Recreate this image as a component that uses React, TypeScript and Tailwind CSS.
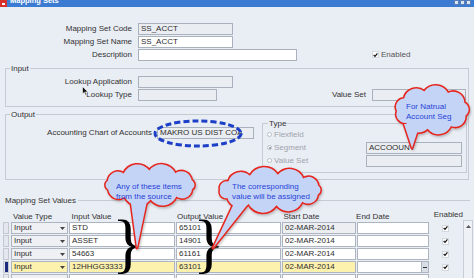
import React from 'react';

function cloudPath(cx: number, cy: number, rx: number, ry: number, n: number, off = 0.3): string {
  const pts: [number, number][] = [];
  for (let i = 0; i < n; i++) {
    const t = (2 * Math.PI * i) / n + off;
    pts.push([cx + rx * Math.cos(t), cy + ry * Math.sin(t)]);
  }
  let d = `M ${pts[0][0].toFixed(2)} ${pts[0][1].toFixed(2)}`;
  for (let i = 1; i <= n; i++) {
    const a = pts[i - 1];
    const b = pts[i % n];
    const c = Math.hypot(b[0] - a[0], b[1] - a[1]);
    const r = c * 0.58;
    d += ` A ${r.toFixed(2)} ${r.toFixed(2)} 0 0 1 ${b[0].toFixed(2)} ${b[1].toFixed(2)}`;
  }
  return d + ' Z';
}

type CloudDef = { cx: number; cy: number; rx: number; ry: number; n: number; tail: string };

const clouds: CloudDef[] = [
  { cx: 150, cy: 185, rx: 44, ry: 14.5, n: 10, tail: 'M 130 196 L 137 248 L 148 196 Z' },
  { cx: 270, cy: 190, rx: 50, ry: 15.5, n: 11, tail: 'M 236 199 L 213 248 L 252 199 Z' },
  { cx: 432, cy: 110, rx: 35, ry: 19, n: 9, tail: 'M 404 124 L 412 148 L 420 124 Z' },
];

function Check() {
  return (
    <svg width="6" height="6" viewBox="0 0 6 6">
      <path d="M0.8 3 L2.4 4.6 L5.3 1" stroke="#111" strokeWidth="1.4" fill="none" />
    </svg>
  );
}

function CheckBox() {
  return (
    <div className="w-[7px] h-[7px] bg-white border border-[#d3d7de] flex items-center justify-center">
      <Check />
    </div>
  );
}

function Input({ w, value, gray }: { w: string; value?: string; gray?: boolean }) {
  return (
    <div
      className={`${w} h-[12px] shrink-0 border border-[#a9b1bd] ${gray ? 'bg-[#eaedf2]' : 'bg-white'} flex items-center pl-[2px] text-[#2e2e2e] leading-none overflow-hidden whitespace-nowrap`}
    >
      {value}
    </div>
  );
}

function Arrow() {
  return (
    <svg width="5" height="3" viewBox="0 0 5 3">
      <path d="M0 0 L5 0 L2.5 3 Z" fill="#444" />
    </svg>
  );
}

type RowData = { inp: string; out: string; start: string; current?: boolean; empty?: boolean; grayStart?: boolean };

const rows: RowData[] = [
  { inp: 'STD', out: '65101', start: '02-MAR-2014', grayStart: true },
  { inp: 'ASSET', out: '14901', start: '02-MAR-2014' },
  { inp: '54663', out: '61161', start: '02-MAR-2014' },
  { inp: '12HHGG3333', out: '63101', start: '02-MAR-2014', current: true },
  { inp: '', out: '', start: '', empty: true },
];

function TableRow({ r }: { r: RowData }) {
  const bg = r.current ? 'bg-[#fcf1ad]' : 'bg-white';
  const cell = `h-[12px] border border-[#aeb5c1] flex items-center pl-[2px] leading-none text-[#2e2e2e]`;
  return (
    <div className="flex h-[12px] pl-[3px] shrink-0">
      <div className="w-[6px] h-[12px] border border-[#c3c8d0] bg-[#e4e8ee] flex items-center justify-center">
        {r.current && <div className="w-[3px] h-[10px] bg-[#1c2a7e]" />}
      </div>
      <div className={`ml-[2px] w-[57px] ${cell} ${r.current ? 'bg-[#fcf1ad]' : 'bg-[#eef0f4]'}`}>
        {!r.empty && <span>Input</span>}
        {!r.empty && (
          <span className="ml-auto mr-[2px] flex">
            <Arrow />
          </span>
        )}
      </div>
      <div className={`ml-[1px] w-[106px] ${cell} ${bg}`}>{r.inp}</div>
      <div className={`ml-[1px] w-[105px] ${cell} ${bg}`}>{r.out}</div>
      <div className={`ml-[1px] w-[74px] ${cell} ${r.grayStart ? 'bg-[#eceef2]' : bg}`}>{r.start}</div>
      <div className={`ml-[1px] w-[72px] ${cell} bg-white ${r.current ? 'pr-0 border-[#8d95a3]' : ''}`}>
        {r.current && (
          <div className="ml-auto w-[7px] h-[10px] bg-[#d9dee6] border-l border-[#a9b1bd] flex items-center justify-center">
            <div className="w-[4px] h-[1px] bg-[#333]" />
          </div>
        )}
      </div>
      <div className="w-[33px] flex items-center justify-center">{!r.empty && <CheckBox />}</div>
    </div>
  );
}

export default function App() {
  return (
    <div className="relative w-[474px] h-[278px] overflow-hidden bg-[#e9edf4] font-['Liberation_Sans',Arial,sans-serif] text-[8px] text-[#333]">
      {/* title bar */}
      <div className="h-[7px] bg-[#3b7bd2] flex items-start overflow-hidden">
        <div className="w-[7px] h-[7px] bg-[#d8312b] flex items-center justify-center">
          <div className="w-[3px] h-[2px] bg-white" />
        </div>
        <span className="ml-[3px] -mt-[4px] text-white text-[7.5px] leading-[9px] font-bold">Mapping Sets</span>
        <div className="ml-auto mr-[3px] flex gap-[1px]">
          <div className="w-[5px] h-[5px] bg-[#dbe5f3] border border-[#5b7fb5]" />
          <div className="w-[5px] h-[5px] bg-[#dbe5f3] border border-[#5b7fb5]" />
          <div className="w-[5px] h-[5px] bg-[#dbe5f3] border border-[#5b7fb5]" />
        </div>
      </div>

      {/* header fields */}
      <div className="pt-[15px]">
        <div className="flex items-center h-[13px]">
          <span className="w-[132px] text-right shrink-0">Mapping Set Code</span>
          <div className="ml-[6px]">
            <Input w="w-[95px]" value="SS_ACCT" gray />
          </div>
        </div>
        <div className="flex items-center h-[13px]">
          <span className="w-[132px] text-right shrink-0">Mapping Set Name</span>
          <div className="ml-[6px]">
            <Input w="w-[95px]" value="SS_ACCT" />
          </div>
        </div>
        <div className="flex items-center h-[13px]">
          <span className="w-[132px] text-right shrink-0">Description</span>
          <div className="ml-[6px]">
            <Input w="w-[159px]" />
          </div>
          <div className="ml-[75px] flex items-center">
            <CheckBox />
            <span className="ml-[2px] text-[#555]">Enabled</span>
          </div>
        </div>
      </div>

      {/* Input */}
      <fieldset className="mx-[5px] mt-[3px] border border-[#c5cbd5] pt-[2px] pb-[5px]">
        <legend className="ml-[4px] px-[1px] leading-[9px]">Input</legend>
        <div className="flex items-center h-[13px]">
          <span className="w-[126px] text-right shrink-0">Lookup Application</span>
          <div className="ml-[6px]">
            <Input w="w-[95px]" gray />
          </div>
        </div>
        <div className="flex items-center h-[13px]">
          <span className="w-[126px] text-right shrink-0">Lookup Type</span>
          <div className="ml-[6px]">
            <Input w="w-[79px]" gray />
          </div>
          <span className="ml-auto">Value Set</span>
          <div className="ml-[6px] mr-[2px]">
            <Input w="w-[94px]" gray />
          </div>
        </div>
      </fieldset>

      {/* Output */}
      <fieldset className="mx-[5px] mt-[3px] border border-[#c5cbd5] pb-[6px]">
        <legend className="ml-[4px] px-[1px] leading-[9px]">Output</legend>
        <div className="flex items-start">
          <div className="flex items-center mt-[8px]">
            <span className="w-[146px] text-right shrink-0">Accounting Chart of Accounts</span>
            <div className="ml-[5px]">
              <Input w="w-[97px]" value="MAKRO US DIST COA" gray />
            </div>
          </div>
          <fieldset className="ml-[8px] w-[205px] border border-[#c5cbd5] pl-[4px] pr-[4px] pb-[5px]">
            <legend className="ml-[1px] px-[1px] leading-[9px]">Type</legend>
            <div className="flex items-center h-[13px]">
              <div className="w-[5px] h-[5px] rounded-full border border-[#b9bec6] bg-white" />
              <span className="ml-[2px] text-[#9fa4ac]">Flexfield</span>
            </div>
            <div className="flex items-center h-[13px]">
              <div className="w-[5px] h-[5px] rounded-full border border-[#b9bec6] bg-white flex items-center justify-center">
                <div className="w-[2px] h-[2px] rounded-full bg-[#8a8f98]" />
              </div>
              <span className="ml-[2px] text-[#9fa4ac]">Segment</span>
              <div className="ml-auto">
                <Input w="w-[96px]" value="ACCOOUNT" gray />
              </div>
            </div>
            <div className="flex items-center h-[13px]">
              <div className="w-[5px] h-[5px] rounded-full border border-[#b9bec6] bg-white" />
              <span className="ml-[2px] text-[#9fa4ac]">Value Set</span>
              <div className="ml-auto">
                <Input w="w-[96px]" gray />
              </div>
            </div>
          </fieldset>
        </div>
      </fieldset>

      {/* Mapping Set Values */}
      <div className="flex items-center mt-[16px] h-[9px] pl-[5px]">
        <span className="leading-[9px]">Mapping Set Values</span>
        <div className="flex-1 h-px bg-[#c5cbd5] ml-[2px] mr-[4px]" />
      </div>
      <div className="flex">
        <div className="w-[463px] flex flex-col">
          <div className="flex items-end h-[17px] pb-[1px] leading-[9px]">
            <div className="w-[13px]" />
            <div className="w-[59px]">Value Type</div>
            <div className="w-[106px]">Input Value</div>
            <div className="w-[107px]">Output Value</div>
            <div className="w-[73px]">Start Date</div>
            <div className="w-[78px]">End Date</div>
            <div className="mb-[2px]">Enabled</div>
          </div>
          <div className="flex flex-col gap-[1px]">
            {rows.map((r, i) => (
              <TableRow key={i} r={r} />
            ))}
          </div>
        </div>
        <div className="w-[10px] mt-[15px] h-[70px] border border-[#c9ced6] bg-[#eef1f5] flex flex-col items-center">
          <svg width="5" height="3" viewBox="0 0 5 3" className="mt-[4px]">
            <path d="M0 3 L5 3 L2.5 0 Z" fill="#555" />
          </svg>
        </div>
      </div>

      {/* braces */}
      <div className="absolute left-[112px] top-[210px] font-['Liberation_Serif',serif] text-[66px] leading-none text-black">
        {'}'}
      </div>
      <div className="absolute left-[193px] top-[210px] font-['Liberation_Serif',serif] text-[66px] leading-none text-black">
        {'}'}
      </div>

      {/* overlay drawings */}
      <svg className="absolute left-0 top-0 pointer-events-none" width="474" height="278" viewBox="0 0 474 278">
        <defs>
          <filter id="sh" x="-20%" y="-20%" width="140%" height="140%">
            <feDropShadow dx="1" dy="1.5" stdDeviation="1" floodColor="#555" floodOpacity="0.35" />
          </filter>
        </defs>
        <ellipse cx="198" cy="133.5" rx="43" ry="12.5" fill="none" stroke="#1d3fc8" strokeWidth="3" strokeDasharray="6 3" />
        {clouds.map((c, i) => {
          const d = cloudPath(c.cx, c.cy, c.rx, c.ry, c.n);
          return (
            <g key={i} filter="url(#sh)">
              <g fill="#e6261d" stroke="#e6261d" strokeWidth="3" strokeLinejoin="round">
                <path d={d} />
                <path d={c.tail} />
              </g>
              <g fill="#c4d4f7">
                <path d={d} />
                <path d={c.tail} />
              </g>
            </g>
          );
        })}
      </svg>

      {/* cloud texts */}
      <div className="absolute left-[116px] top-[182px] text-[8px] leading-[10px] text-[#2743d8]">
        <div>Any of these items</div>
        <div>from the source</div>
      </div>
      <div className="absolute left-[232px] top-[182px] text-[8px] leading-[10px] text-[#2743d8]">
        <div>The corresponding</div>
        <div>value will be assigned</div>
      </div>
      <div className="absolute left-[406px] top-[102px] text-[8px] leading-[10px] text-[#2743d8]">
        <div>For Natrual</div>
        <div>Account Seg</div>
      </div>

      {/* mouse cursor */}
      <svg className="absolute left-[82px] top-[86px]" width="7" height="10" viewBox="0 0 7 10">
        <path d="M0.5 0.5 L0.5 8 L2.3 6.3 L3.6 9.2 L4.7 8.7 L3.5 5.9 L6 5.9 Z" fill="#111" stroke="#fff" strokeWidth="0.6" />
      </svg>
    </div>
  );
}
